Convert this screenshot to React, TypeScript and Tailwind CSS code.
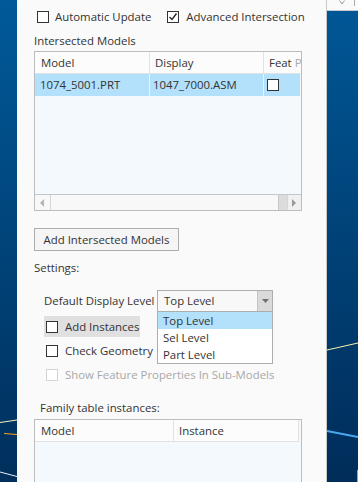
import React from 'react';

function Box({ checked = false, disabled = false }: { checked?: boolean; disabled?: boolean }) {
  return (
    <span
      className={`w-[12px] h-[12px] border bg-white flex items-center justify-center shrink-0 ${
        disabled ? 'border-[#d4d4d4]' : 'border-[#333333]'
      }`}
    >
      {checked && (
        <svg width="10" height="10" viewBox="0 0 10 10">
          <path d="M1.5 5 L4 7.5 L8.5 1.5" fill="none" stroke="#222" strokeWidth="1.3" />
        </svg>
      )}
    </span>
  );
}

export default function App() {
  return (
    <div
      className="w-[358px] h-[482px] flex overflow-hidden text-[11.4px] text-[#333333] whitespace-nowrap"
      style={{ fontFamily: '"Open Sans", "Noto Sans", sans-serif' }}
    >
      {/* left viewport strip */}
      <div className="w-[17px] h-full bg-gradient-to-b from-[#005a99] to-[#002f5c] shrink-0">
        <svg width="17" height="482">
          <path d="M0 422.5 L17 420" stroke="#f4f4c0" strokeWidth="1" fill="none" />
          <path d="M4 433.5 L17 434.5" stroke="#f5a623" strokeWidth="1" fill="none" />
          <path d="M0 472 L17 476.5" stroke="#e8eef4" strokeWidth="1" fill="none" />
        </svg>
      </div>

      {/* dialog panel */}
      <div className="w-[310px] h-full bg-[#fafafa] border-r border-[#c9c9c9] relative shrink-0">
        <div className="pl-[20px] mt-[8px] flex items-center h-[18px]">
          <Box />
          <span className="ml-[6px]">Automatic Update</span>
          <span className="ml-[16px]"><Box checked /></span>
          <span className="ml-[7px]">Advanced Intersection</span>
        </div>
        <div className="pl-[17px] h-[17px] flex items-center mt-[6px]">Intersected Models</div>

        {/* intersected models table */}
        <div className="ml-[17px] mt-[2px] w-[268px] h-[160px] border border-[#bdbdbd] bg-[#f3f9fd] flex flex-col">
          <div className="h-[22px] bg-[#fcfcfc] border-b border-[#e2e2e2] flex shrink-0">
            <div className="w-[115px] pl-[6px] flex items-center border-r border-[#e2e2e2]">Model</div>
            <div className="w-[114px] pl-[5px] flex items-center border-r border-[#e2e2e2]">Display</div>
            <div className="flex-1 pl-[5px] flex items-center overflow-hidden">
              Feat <span className="text-[#aaaaaa] ml-[3px]">P</span>
            </div>
          </div>
          <div className="h-[22px] bg-[#b3e0fa] flex shrink-0 mr-[1px]">
            <div className="w-[115px] pl-[5px] flex items-center border-r border-[#e6f4fc]">1074_5001.PRT</div>
            <div className="w-[114px] pl-[3px] flex items-center border-r border-[#e6f4fc]">1047_7000.ASM</div>
            <div className="flex-1 pl-[3px] flex items-center"><Box /></div>
          </div>
          <div className="flex-1" />
          <div className="h-[16px] flex border-t border-[#c6c6c6] shrink-0">
            <div className="w-[16px] bg-[#f8f8f8] border-r border-[#d6d6d6] flex items-center justify-center">
              <svg width="5" height="8" viewBox="0 0 5 8"><path d="M4 0 L0 4 L4 8Z" fill="#b5b5b5" /></svg>
            </div>
            <div className="flex-1 bg-[#f8f8f8] border-r border-[#c6c6c6]" />
            <div className="w-[8px] bg-[#dcdcdc]" />
            <div className="w-[14px] bg-[#f0f0f0] border-l border-[#d6d6d6] flex items-center justify-center">
              <svg width="5" height="8" viewBox="0 0 5 8"><path d="M0 0 L4 4 L0 8Z" fill="#9a9a9a" /></svg>
            </div>
          </div>
        </div>

        <button className="ml-[17px] mt-[17px] w-[145px] h-[23px] border border-[#adadad] bg-[#f5f5f5] flex items-center justify-center">
          Add Intersected Models
        </button>

        <div className="pl-[17px] mt-[9px] h-[16px] flex items-center">Settings:</div>

        <div className="pl-[27px] mt-[14px] flex items-center h-[22px]">
          <span className="w-[113px]">Default Display Level</span>
          <div className="w-[116px] h-[22px] border border-[#adadad] bg-[#f8f8f8] flex">
            <span className="flex-1 pl-[6px] flex items-center">Top Level</span>
            <span className="w-[15px] bg-[#dadada] border-l border-[#c4c4c4] flex items-center justify-center">
              <svg width="7" height="4" viewBox="0 0 7 4"><path d="M0 0 L7 0 L3.5 4Z" fill="#6f6f6f" /></svg>
            </span>
          </div>
        </div>

        <div className="pl-[27px] mt-[4px] flex flex-col">
          <div className="w-[96px] h-[21px] bg-[#e0e0e0] flex items-center pl-[2px]">
            <Box />
            <span className="ml-[7px]">Add Instances</span>
          </div>
          <div className="h-[24px] flex items-center pl-[2px] mt-[2px]">
            <Box />
            <span className="ml-[7px]">Check Geometry</span>
          </div>
          <div className="h-[24px] flex items-center pl-[2px] text-[#a8a8a8]">
            <Box disabled />
            <span className="ml-[7px]">Show Feature Properties In Sub-Models</span>
          </div>
        </div>

        <div className="pl-[23px] mt-[13px] h-[16px] flex items-center">Family table instances:</div>

        {/* family table */}
        <div className="ml-[17px] mt-[3px] w-[268px] h-[80px] border border-[#bdbdbd] bg-[#f3f9fd]">
          <div className="h-[22px] bg-[#fcfcfc] border-b border-r border-[#e2e2e2] flex mr-[2px]">
            <div className="w-[139px] pl-[6px] flex items-center border-r border-[#e2e2e2]">Model</div>
            <div className="flex-1 pl-[5px] flex items-center">Instance</div>
          </div>
        </div>

        {/* open dropdown list */}
        <div className="absolute left-[140px] top-[311px] w-[116px] h-[53px] border border-[#adadad] bg-white flex flex-col">
          <div className="h-[17px] bg-[#b3e0fa] pl-[5px] flex items-center">Top Level</div>
          <div className="h-[17px] pl-[5px] flex items-center">Sel Level</div>
          <div className="h-[17px] pl-[5px] flex items-center">Part Level</div>
        </div>
      </div>

      {/* right viewport */}
      <div className="flex-1 h-full flex flex-col">
        <div className="h-[11px] bg-[#fafafa] border-b border-[#c9c9c9] flex items-start pl-[12px] gap-[9px]">
          <svg width="6" height="5" viewBox="0 0 6 5"><path d="M0.5 0.5 L3 4 L5.5 0.5" fill="none" stroke="#999" strokeWidth="1" /></svg>
          <span className="w-[1px] h-[6px] bg-[#aaa]" />
        </div>
        <div className="flex-1 bg-gradient-to-b from-[#005795] to-[#002d5a] relative">
          <svg width="31" height="471" className="absolute top-0 left-0">
            <path d="M0 339 L31 332" stroke="#f5f5a8" strokeWidth="1" fill="none" />
            <path d="M0 420 L31 426" stroke="#4aa8f0" strokeWidth="2" fill="none" />
            <rect x="30" y="459" width="1" height="12" fill="#29d3f0" />
          </svg>
        </div>
      </div>
    </div>
  );
}
